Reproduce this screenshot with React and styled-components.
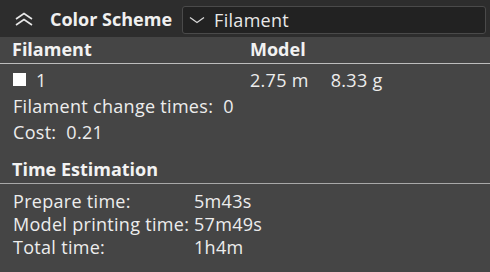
import React from "react";
import styled, { createGlobalStyle } from "styled-components";

const Global = createGlobalStyle`
  html, body { margin: 0; padding: 0; background: #454545; }
  body { font-family: "Open Sans", "Noto Sans", sans-serif; color: #ededed; }
`;

const Panel = styled.div`
  width: 490px;
  height: 272px;
  background: #454545;
  display: flex;
  flex-direction: column;
  overflow: hidden;
`;

const TopBar = styled.div`
  height: 37px;
  flex: none;
  background: #2d2d2d;
  display: flex;
  align-items: center;
  padding: 0 4px 0 14px;
  box-sizing: border-box;
`;

const Title = styled.span`
  font-weight: 700;
  font-size: 18px;
  margin-left: 16px;
  color: #f0f0f0;
  line-height: 1;
`;

const Combo = styled.div`
  margin-left: 10px;
  flex: 1;
  height: 28px;
  margin-top: 3px;
  background: #222222;
  border: 1px solid #4a4a4a;
  border-radius: 3px;
  display: flex;
  align-items: center;
  padding-left: 6px;
  font-size: 18px;
  letter-spacing: 0.3px;
  color: #e8e8e8;
  box-sizing: border-box;
`;

const ComboText = styled.span`
  margin-left: 9px;
  line-height: 1;
`;

const HeadRow = styled.div`
  display: grid;
  grid-template-columns: ${(p) => p.$cols || "238px 1fr"};
  padding: 0 12px ${(p) => p.$pb || 0}px;
  height: ${(p) => p.$h || 27}px;
  box-sizing: border-box;
  flex: none;
  align-items: center;
  font-weight: 700;
  font-size: 18px;
  line-height: 1;
  border-bottom: 1px solid ${(p) => p.$line || "#bdbdbd"};
  color: #f2f2f2;
`;

const Section = styled.div`
  padding: ${(p) => p.$pt || 0}px 13px 0;
  display: flex;
  flex-direction: column;
  flex: none;
`;

const Row = styled.div`
  display: grid;
  grid-template-columns: ${(p) => p.$cols || "auto"};
  height: ${(p) => p.$h || 25}px;
  align-items: center;
  font-size: 18px;
  letter-spacing: 0.3px;
  line-height: 1;
`;

const FilamentCell = styled.div`
  display: flex;
  align-items: center;
  gap: 10px;
`;

const Swatch = styled.span`
  width: 13px;
  height: 13px;
  background: #ffffff;
  display: inline-block;
`;

const Amounts = styled.div`
  display: flex;
  gap: 22px;
`;

const Spacer = styled.div`
  height: ${(p) => p.$h}px;
  flex: none;
`;

const DoubleUp = () => (
  <svg width="20" height="14" viewBox="0 0 20 14" fill="none" stroke="#e8e8e8" strokeWidth="1.6">
    <path d="M2 7 L10 1.5 L18 7" />
    <path d="M2 13 L10 7.5 L18 13" />
  </svg>
);

const ChevDown = () => (
  <svg width="16" height="8" viewBox="0 0 16 8" fill="none" stroke="#d8d8d8" strokeWidth="1.3">
    <path d="M1 1.5 L8 6.5 L15 1.5" />
  </svg>
);

export default function App() {
  return (
    <>
      <Global />
      <Panel>
        <TopBar>
          <DoubleUp />
          <Title>Color Scheme</Title>
          <Combo>
            <ChevDown />
            <ComboText>Filament</ComboText>
          </Combo>
        </TopBar>
        <HeadRow $pb={3}>
          <span>Filament</span>
          <span>Model</span>
        </HeadRow>
        <Section $pt={2}>
          <Row $cols="237px 1fr" $h={27}>
            <FilamentCell>
              <Swatch />
              <span>1</span>
            </FilamentCell>
            <Amounts>
              <span>2.75 m</span>
              <span>8.33 g</span>
            </Amounts>
          </Row>
          <Row $h={26}>Filament change times:&nbsp; 0</Row>
          <Row $h={26}>Cost:&nbsp; 0.21</Row>
        </Section>
        <Spacer $h={10} />
        <HeadRow $cols="1fr" $line="#a8a8a8" $h={29}>
          <span>Time Estimation</span>
        </HeadRow>
        <Section $pt={5}>
          <Row $cols="181px 1fr" $h={23}>
            <span>Prepare time:</span>
            <span>5m43s</span>
          </Row>
          <Row $cols="181px 1fr" $h={23}>
            <span>Model printing time:</span>
            <span>57m49s</span>
          </Row>
          <Row $cols="181px 1fr" $h={23}>
            <span>Total time:</span>
            <span>1h4m</span>
          </Row>
        </Section>
      </Panel>
    </>
  );
}
